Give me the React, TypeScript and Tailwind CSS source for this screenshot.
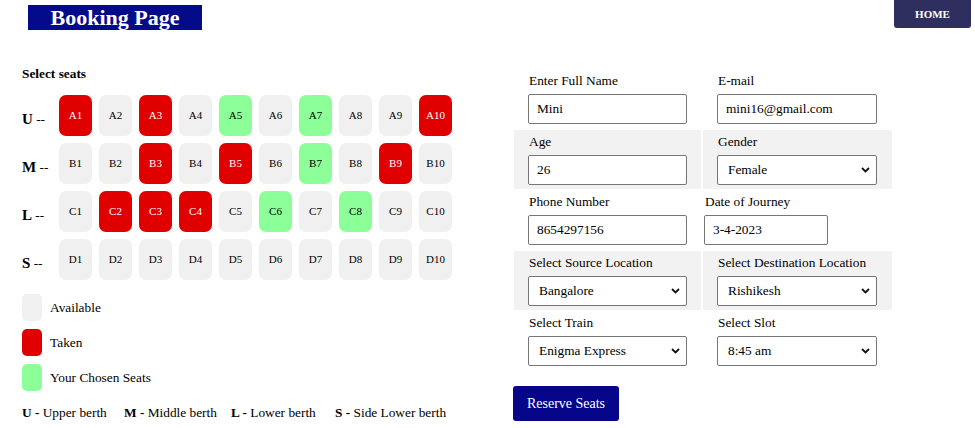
import { ReactNode } from "react";

type SeatState = "free" | "taken" | "mine";

const rows: { label: string; prefix: string; taken: number[]; mine: number[] }[] = [
  { label: "U", prefix: "A", taken: [1, 3, 10], mine: [5, 7] },
  { label: "M", prefix: "B", taken: [3, 5, 9], mine: [7] },
  { label: "L", prefix: "C", taken: [2, 3, 4], mine: [6, 8] },
  { label: "S", prefix: "D", taken: [], mine: [] },
];

const seatColor: Record<SeatState, string> = {
  free: "bg-[#f0f0f0] text-black",
  taken: "bg-[#e00000] text-white",
  mine: "bg-[#8cff98] text-black",
};

function Chevron() {
  return (
    <svg
      width="9"
      height="6"
      viewBox="0 0 9 6"
      className="pointer-events-none absolute right-[7px] top-[12px]"
    >
      <path d="M1 1l3.5 3.5L8 1" fill="none" stroke="#111" strokeWidth="1.8" />
    </svg>
  );
}

function TextBox({ value, width = "w-[159px]" }: { value: string; width?: string }) {
  return (
    <input
      readOnly
      value={value}
      className={`${width} h-[30px] rounded-[2px] border border-[#767676] bg-white px-[8px] text-[13.33px] text-black outline-none`}
    />
  );
}

function Select({ value, width = "w-[160px]" }: { value: string; width?: string }) {
  return (
    <div className={`relative ${width}`}>
      <select
        defaultValue={value}
        className="h-[30px] w-full appearance-none rounded-[2px] border border-[#767676] bg-white pl-[10px] text-[13.33px] text-black outline-none"
      >
        <option>{value}</option>
      </select>
      <Chevron />
    </div>
  );
}

function Cell({
  label,
  children,
  shade,
  pad = "pl-[14px]",
}: {
  label: string;
  children: ReactNode;
  shade?: boolean;
  pad?: string;
}) {
  return (
    <div
      className={`flex h-[59px] flex-col pt-[3px] ${pad} ${shade ? "bg-[#f2f2f2]" : ""}`}
    >
      <label className="mb-[5px] ml-[1px] h-[17px] text-[13.33px] leading-[17px]">
        {label}
      </label>
      {children}
    </div>
  );
}

export default function App() {
  return (
    <div className="relative h-[428px] w-full overflow-hidden bg-white text-black [font-family:'Liberation_Serif','Times_New_Roman',serif]">
      {/* Header */}
      <div className="pl-[28px] pt-[5px]">
        <h1 className="flex h-[25px] w-[174px] items-center justify-center bg-[#030b8a] text-[22px] font-bold leading-none text-white">
          Booking Page
        </h1>
      </div>
      <button
        type="button"
        className="absolute right-[4px] top-0 h-[28px] w-[77px] rounded-b-[3px] bg-[#2f2f5f] text-[11px] font-bold text-white"
      >
        HOME
      </button>

      <div className="mt-[36px] flex">
        {/* Seats */}
        <section className="w-[514px] shrink-0 pl-[22px]">
          <p className="h-[16px] text-[13.33px] font-bold leading-[16px]">Select seats</p>
          <div className="mt-[13px] flex flex-col gap-[7px]">
            {rows.map((row) => (
              <div key={row.label} className="flex items-center">
                <span className="mt-[8px] w-[37px] text-[13.33px]">
                  <b className="text-[15px]">{row.label}</b> --
                </span>
                <div className="flex gap-[7px]">
                  {Array.from({ length: 10 }, (_, i) => {
                    const n = i + 1;
                    const state: SeatState = row.taken.includes(n)
                      ? "taken"
                      : row.mine.includes(n)
                        ? "mine"
                        : "free";
                    return (
                      <div
                        key={n}
                        className={`flex h-[41px] w-[33px] items-center justify-center rounded-[7px] text-[11px] ${seatColor[state]}`}
                      >
                        {row.prefix}
                        {n}
                      </div>
                    );
                  })}
                </div>
              </div>
            ))}
          </div>

          <div className="mt-[14px] flex flex-col gap-[8px] text-[13.33px]">
            {[
              { c: "bg-[#f0f0f0]", t: "Available" },
              { c: "bg-[#e00000]", t: "Taken" },
              { c: "bg-[#8cff98]", t: "Your Chosen Seats" },
            ].map((l) => (
              <div key={l.t} className="flex items-center gap-[8px]">
                <div className={`h-[27px] w-[20px] rounded-[5px] ${l.c}`} />
                <span>{l.t}</span>
              </div>
            ))}
          </div>

          <div className="mt-[12px] flex text-[13.33px]">
            <span className="w-[102px]">
              <b>U -</b> Upper berth
            </span>
            <span className="w-[107px]">
              <b>M -</b> Middle berth
            </span>
            <span className="w-[104px]">
              <b>L -</b> Lower berth
            </span>
            <span>
              <b>S -</b> Side Lower berth
            </span>
          </div>
        </section>

        {/* Form */}
        <section className="mt-[3px]">
          <div className="grid w-[378px] grid-cols-[187px_189px] gap-x-[2px] gap-y-[1.5px]">
            <Cell label="Enter Full Name">
              <TextBox value="Mini" />
            </Cell>
            <Cell label="E-mail">
              <TextBox value="mini16@gmail.com" width="w-[160px]" />
            </Cell>
            <Cell label="Age" shade>
              <TextBox value="26" />
            </Cell>
            <Cell label="Gender" shade>
              <Select value="Female" />
            </Cell>
            <Cell label="Phone Number">
              <TextBox value="8654297156" />
            </Cell>
            <Cell label="Date of Journey" pad="pl-[1px]">
              <TextBox value="3-4-2023" width="w-[124px]" />
            </Cell>
            <Cell label="Select Source Location" shade>
              <Select value="Bangalore" width="w-[159px]" />
            </Cell>
            <Cell label="Select Destination Location" shade>
              <Select value="Rishikesh" />
            </Cell>
            <Cell label="Select Train">
              <Select value="Enigma Express" width="w-[159px]" />
            </Cell>
            <Cell label="Select Slot">
              <Select value="8:45 am" />
            </Cell>
          </div>
          <button
            type="button"
            className="-ml-[1px] mt-[16px] h-[35px] w-[106px] rounded-[3px] bg-[#06068a] text-[14px] text-white"
          >
            Reserve Seats
          </button>
        </section>
      </div>
    </div>
  );
}
